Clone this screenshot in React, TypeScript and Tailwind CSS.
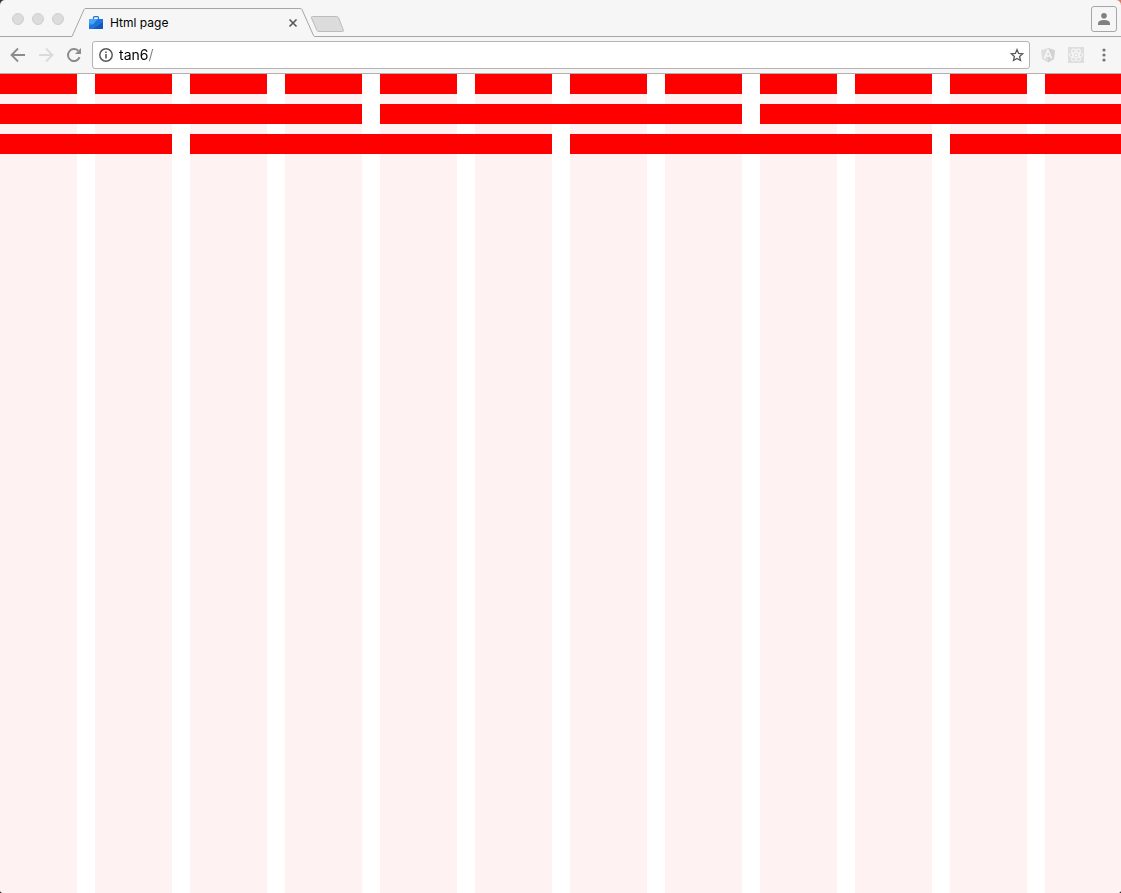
import React from "react";

const columns = Array.from({ length: 12 }, (_, i) => i);

function Bar({ span }: { span: string }) {
  return <div className={`h-5 bg-[#ff0000] ${span}`} />;
}

function TabStrip() {
  return (
    <header className="flex h-[37px] shrink-0 items-stretch">
      <div className="flex w-[72px] shrink-0 items-start gap-2 border-b border-[#a6a6a6] pt-[13px] pl-3">
        <button aria-label="Close window" className="size-3 rounded-full border border-[#d0d0d0] bg-[#dcdcdc]" />
        <button aria-label="Minimize window" className="size-3 rounded-full border border-[#d0d0d0] bg-[#dcdcdc]" />
        <button aria-label="Zoom window" className="size-3 rounded-full border border-[#d0d0d0] bg-[#dcdcdc]" />
      </div>
      <svg className="h-[37px] w-[14px] shrink-0" viewBox="0 0 14 37" fill="none" stroke="#a6a6a6">
        <path d="M0 36.5L12 9.6Q12.500 8.500 14 8.500" />
      </svg>
      <div className="mt-2 flex w-[214px] items-center border-t border-[#a6a6a6]">
        <svg className="ml-[3px] size-[14px]" viewBox="0 0 14 14">
          <path d="M4.500 3V1.700Q4.500 .7 5.500 .7h3q1 0 1 1V3" fill="none" stroke="#1f74d6" strokeWidth="1.200" />
          <path d="M0 3h14V12.300q0 .7-.7.7H.7Q0 13 0 12.300z" fill="#2f8cea" />
          <path d="M0 3h8L4 8.500 0 7z" fill="#48a4f6" />
          <path d="M0 9.500l4-1L9.500 3H14v5L9 13H.7Q0 13 0 12.300z" fill="#1e74dc" />
          <path d="M4 13L14 6v6.300q0 .7-.7.7z" fill="#1558bd" />
        </svg>
        <span className="ml-[7px] font-[Inter,sans-serif] text-[12px] leading-4 text-black">Html page</span>
        <button aria-label="Close tab" className="mr-[2px] ml-auto">
          <svg className="size-[10px]" viewBox="0 0 10 10" stroke="#5a5a5a" strokeWidth="1.700">
            <path d="M1.500 1.500l7 7M8.500 1.500l-7 7" />
          </svg>
        </button>
      </div>
      <svg className="h-[37px] w-[15px] shrink-0" viewBox="0 0 15 37" fill="none" stroke="#a6a6a6">
        <path d="M0 8.500Q1.500 8.500 2 9.600L13.500 35.500Q14 36.500 15 36.500" />
      </svg>
      <div className="flex flex-1 items-start justify-between border-b border-[#a6a6a6] pr-1">
        <button aria-label="New tab" className="mt-[15px] -ml-[5px]">
          <svg className="h-[18px] w-[35px]" viewBox="0 0 35 18">
            <path d="M2.500 1.500H26.500Q28 1.500 28.600 2.800L33.300 15Q34 16.500 32.500 16.500H9Q7.500 16.500 6.800 15.200L1.500 3Q.8 1.500 2.500 1.500z" fill="#dcdcdc" stroke="#bcbcbc" />
          </svg>
        </button>
        <button aria-label="Profile" className="mt-[6px] flex size-[26px] items-center justify-center rounded-[3px] border border-[#a6a6a6]">
          <svg className="h-3 w-3" viewBox="0 0 12 12" fill="#808080">
            <circle cx="6" cy="2.800" r="2.800" />
            <path d="M0 12v-1.500q0-3.500 6-3.500t6 3.500V12z" />
          </svg>
        </button>
      </div>
    </header>
  );
}

function Toolbar() {
  return (
    <nav className="flex h-[37px] shrink-0 items-center border-b border-[#b0b0b0] pr-2 pl-[10px]">
      <button aria-label="Back">
        <svg className="size-4" viewBox="0 0 16 16" fill="none" stroke="#8c8c8c" strokeWidth="1.800">
          <path d="M15 8H2M8 1.500L1.500 8 8 14.500" />
        </svg>
      </button>
      <button aria-label="Forward" className="ml-3">
        <svg className="size-4" viewBox="0 0 16 16" fill="none" stroke="#dadada" strokeWidth="1.800">
          <path d="M1 8h13M8 1.500L14.500 8 8 14.500" />
        </svg>
      </button>
      <button aria-label="Reload" className="ml-3">
        <svg className="size-4" viewBox="0 0 16 16">
          <path d="M13.600 10.200A6 6 0 1 1 12.200 3.800" fill="none" stroke="#8c8c8c" strokeWidth="2" />
          <path d="M15 1v6H9z" fill="#8c8c8c" />
        </svg>
      </button>
      <div className="ml-[10px] flex h-7 flex-1 items-center rounded-[3px] border border-[#b4b4b4] bg-white pr-[5px] pl-[6px]">
        <svg className="size-[14px] shrink-0" viewBox="0 0 14 14" fill="none" stroke="#5a5a5a">
          <circle cx="7" cy="7" r="6.200" strokeWidth="1.500" />
          <path d="M7 6v4.500M7 3.500V5" strokeWidth="1.600" />
        </svg>
        <input
          type="text"
          aria-label="Address"
          defaultValue="tan6/"
          className="ml-[6px] min-w-0 flex-1 bg-linear-to-r from-black from-[29px] to-[#808080] to-[29px] bg-clip-text font-[Inter,sans-serif] text-[14px] leading-5 text-transparent caret-black outline-none"
        />
        <button aria-label="Bookmark this page">
          <svg className="size-[14px]" viewBox="0 0 14 14" fill="none" stroke="#5a5a5a" strokeWidth="1.300">
            <path d="M7 1.600l1.600 3.800 4.100.4-3.100 2.700.9 4L7 10.400l-3.500 2.100.9-4L1.300 5.800l4.100-.4z" />
          </svg>
        </button>
      </div>
      <button aria-label="Angular extension" className="ml-[10px]">
        <svg className="size-4" viewBox="0 0 16 16">
          <path d="M8 1l7 2.300-1.200 9L8 15.500l-5.800-3.200L1 3.300z" fill="#dedede" />
          <path d="M8 1l7 2.300-1.200 9L8 15.500z" fill="#d2d2d2" />
          <path d="M4.300 11.500L8 3.200l3.700 8.300M5.800 9h4.400" fill="none" stroke="#f7f7f7" strokeWidth="1.500" />
        </svg>
      </button>
      <button aria-label="React extension" className="ml-3">
        <svg className="size-4" viewBox="0 0 16 16">
          <rect width="16" height="16" fill="#dedede" />
          <g fill="none" stroke="#f8f8f8" strokeWidth=".9">
            <ellipse cx="8" cy="8" rx="6.800" ry="2.700" />
            <ellipse cx="8" cy="8" rx="6.800" ry="2.700" transform="rotate(60 8 8)" />
            <ellipse cx="8" cy="8" rx="6.800" ry="2.700" transform="rotate(120 8 8)" />
          </g>
          <circle cx="8" cy="8" r="1.300" fill="#f8f8f8" />
        </svg>
      </button>
      <button aria-label="Menu" className="ml-3">
        <svg className="h-4 w-[17px]" viewBox="0 0 17 16" fill="#757575">
          <circle cx="8" cy="3" r="1.600" />
          <circle cx="8" cy="8" r="1.600" />
          <circle cx="8" cy="13" r="1.600" />
        </svg>
      </button>
    </nav>
  );
}

function GridPage() {
  return (
    <main className="grid flex-1 overflow-hidden bg-white">
      <div className="col-start-1 row-start-1 -mr-px grid grid-cols-12 gap-x-[18px]">
        {columns.map((i) => (
          <div key={i} className="bg-[#fff2f2]" />
        ))}
      </div>
      <div className="col-start-1 row-start-1 -mr-px grid grid-cols-12 content-start gap-x-[18px] gap-y-[10px]">
        {columns.map((i) => (
          <Bar key={i} span="col-span-1" />
        ))}
        <Bar span="col-span-4" />
        <Bar span="col-span-4" />
        <Bar span="col-span-4" />
        <Bar span="col-span-2" />
        <Bar span="col-span-4" />
        <Bar span="col-span-4" />
        <Bar span="col-span-2" />
      </div>
    </main>
  );
}

export default function App() {
  return (
    <div className="relative bg-[#333333]">
      <div className="absolute top-0 right-0 size-1 bg-[#d9785a]" />
      <div className="relative flex min-h-screen flex-col overflow-hidden rounded-t-[5px] rounded-b-[4px] bg-[#f6f6f6]">
        <TabStrip />
        <Toolbar />
        <GridPage />
      </div>
    </div>
  );
}
